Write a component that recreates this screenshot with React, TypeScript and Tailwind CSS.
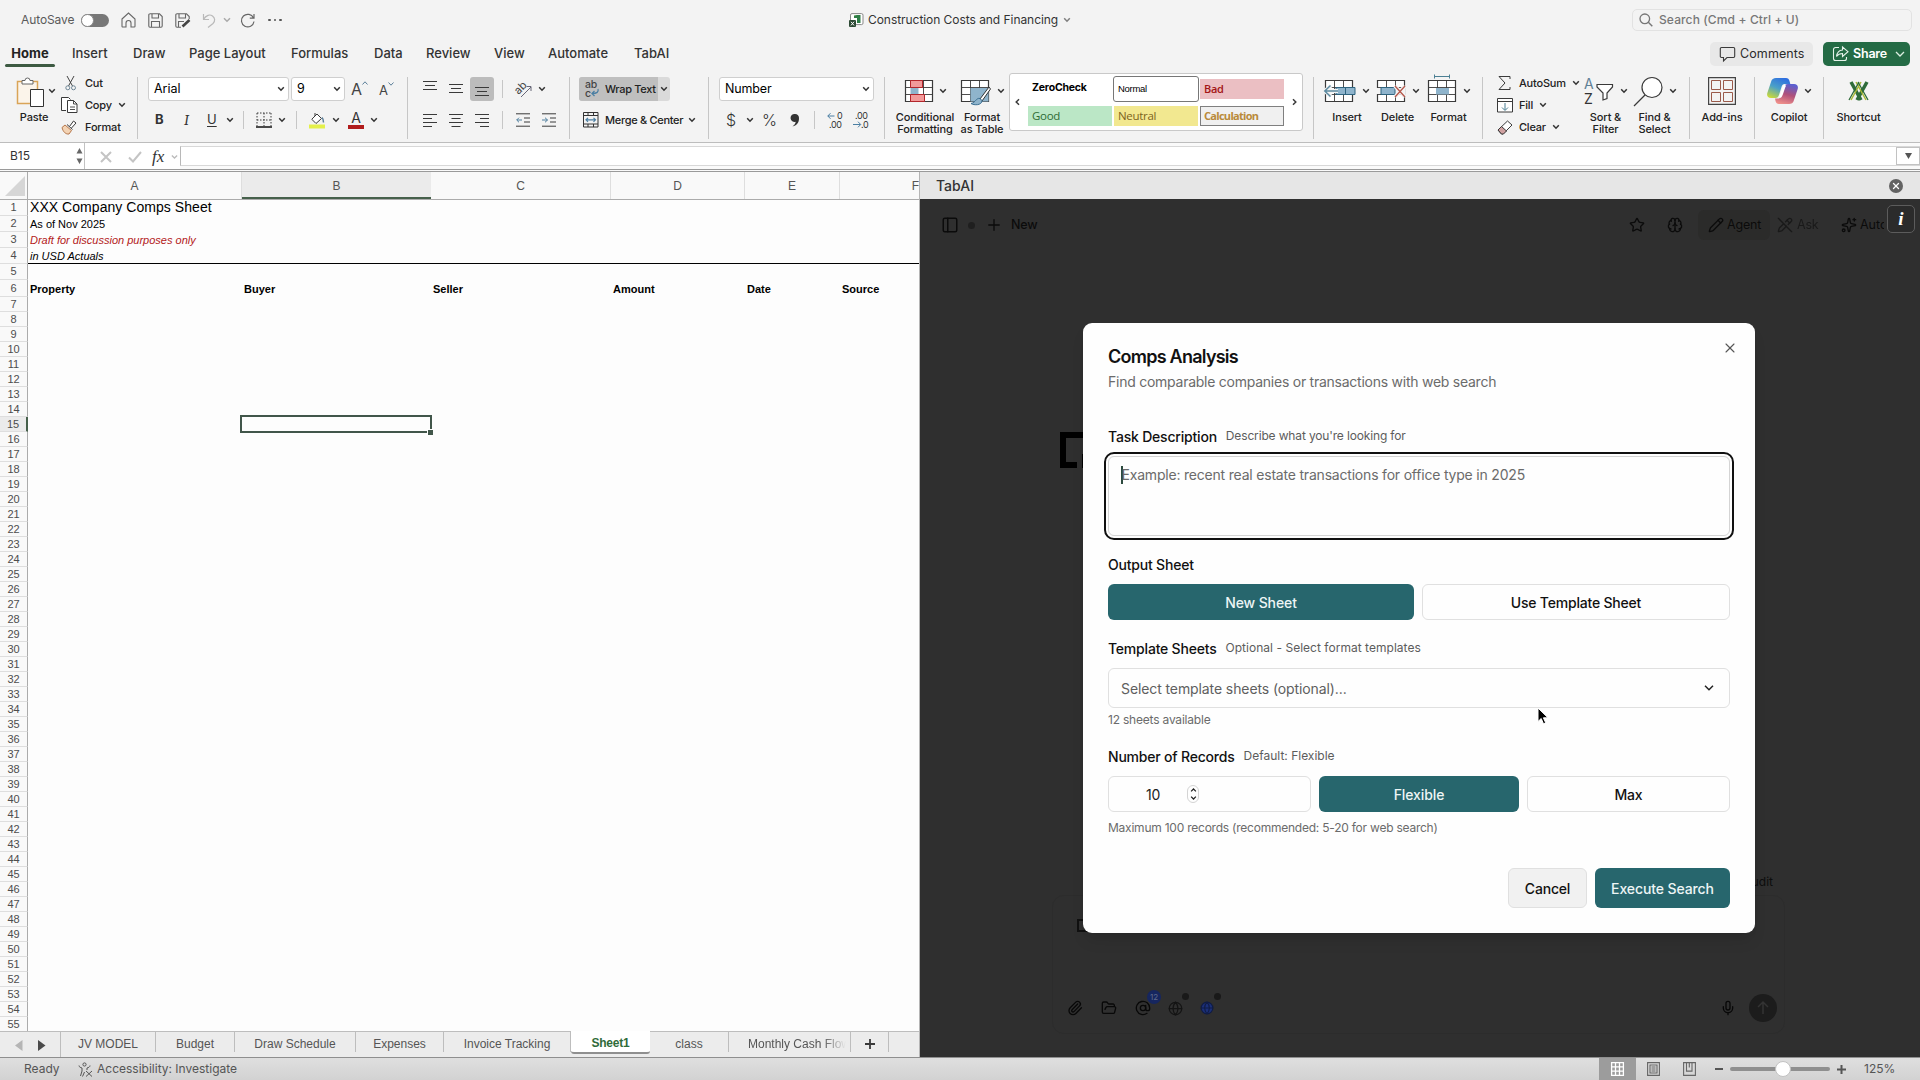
import type { ReactNode } from 'react';
import {
  AtSign,
  Brain,
  FolderOpen,
  Globe,
  Mic,
  PanelLeft,
  Paperclip,
  Pencil,
  PencilOff,
  Plus,
  Sparkles,
  Star,
  X,
} from 'lucide-react';

const TABS = [
  { label: 'Insert', width: 'w-[61px]' },
  { label: 'Draw', width: 'w-[56px]' },
  { label: 'Page Layout', width: 'w-[102px]' },
  { label: 'Formulas', width: 'w-[83px]' },
  { label: 'Data', width: 'w-[52px]' },
  { label: 'Review', width: 'w-[68px]' },
  { label: 'View', width: 'w-[54px]' },
  { label: 'Automate', width: 'w-[86px]' },
  { label: 'TabAI', width: 'w-[60px]' },
];

const COLUMNS = [
  { key: 'A', width: 'w-[214px]' },
  { key: 'B', width: 'w-[189px]' },
  { key: 'C', width: 'w-[180px]' },
  { key: 'D', width: 'w-[134px]' },
  { key: 'E', width: 'w-[95px]' },
  { key: 'F', width: 'w-[152px]' },
];

const HEADINGS = ['Property', 'Buyer', 'Seller', 'Amount', 'Date', 'Source'];

const ROWS = Array.from({ length: 55 }, (_, i) => i + 1);

const SHEETS = [
  { label: 'JV MODEL', width: 'w-[95px]' },
  { label: 'Budget', width: 'w-[79px]' },
  { label: 'Draw Schedule', width: 'w-[121px]' },
  { label: 'Expenses', width: 'w-[88px]' },
  { label: 'Invoice Tracking', width: 'w-[127px]' },
  { label: 'Sheet1', width: 'w-[79px]', active: true },
  { label: 'class', width: 'w-[79px]' },
];

/* ---------- small shared pieces ---------- */

function Chevron({ className = '' }: { className?: string }) {
  return (
    <svg
      viewBox="0 0 8 6"
      className={`h-[6px] w-[8px] shrink-0 ${className}`}
      fill="none"
      stroke="#333"
      strokeWidth="1.5"
    >
      <path d="M1.2 1.2 4 4.2 6.8 1.2" />
    </svg>
  );
}

function Divider({ className = '' }: { className?: string }) {
  return <div className={`mt-1 h-[62px] w-px shrink-0 bg-[#c6c6c6] ${className}`} />;
}

function MiniDivider({ className = '' }: { className?: string }) {
  return <div className={`h-[18px] w-px shrink-0 bg-[#c6c6c6] ${className}`} />;
}

interface SvgProps {
  w: number;
  h: number;
  className?: string;
  children: ReactNode;
}

function Svg({ w, h, className = '', children }: SvgProps) {
  return (
    <svg
      width={w}
      height={h}
      viewBox={`0 0 ${w} ${h}`}
      className={`shrink-0 overflow-visible ${className}`}
      fill="none"
      stroke="#3a3a3a"
    >
      {children}
    </svg>
  );
}

function BigButton({
  label,
  icon,
  width,
  chevron = true,
}: {
  label: string[];
  icon: ReactNode;
  width: string;
  chevron?: boolean;
}) {
  return (
    <div className={`mt-1 flex shrink-0 flex-col items-center ${width}`}>
      <div className="flex h-[34px] items-start gap-1.5">
        {icon}
        {chevron && <Chevron className="mt-[11px]" />}
      </div>
      <div className="text-center text-[11px] leading-[12px] font-medium tracking-[-0.12px] whitespace-nowrap text-[#222]">
        {label.map((line) => (
          <div key={line}>{line}</div>
        ))}
      </div>
    </div>
  );
}

function SmallButton({
  label,
  icon,
  chevron,
}: {
  label: string;
  icon: ReactNode;
  chevron?: boolean;
}) {
  return (
    <div className="flex h-[22px] items-center text-[11px] font-medium tracking-[-0.2px] text-[#222]">
      <div className="flex w-[22px] items-center">{icon}</div>
      <span className="whitespace-nowrap">{label}</span>
      {chevron && <Chevron className="ml-1.5" />}
    </div>
  );
}

function AlignIcon({
  lines,
  className = '',
}: {
  lines: [number, number, number][];
  className?: string;
}) {
  return (
    <Svg w={14} h={14} className={className}>
      {lines.map(([x1, x2, y]) => (
        <path key={y} d={`M${x1} ${y}H${x2}`} />
      ))}
    </Svg>
  );
}

/* ---------- title bar ---------- */

function TitleBar() {
  return (
    <div className="flex h-[40px] items-center">
      <div className="flex w-[849px] items-center pl-[21px]">
        <span className="w-[60px] text-[12px] tracking-[-0.1px] text-[#5a5a5a]">AutoSave</span>
        <div className="flex h-[13px] w-[28px] items-center rounded-full bg-[#777]">
          <div className="h-[13px] w-[13px] rounded-full border border-[#8a8a8a] bg-white" />
        </div>
        <Svg w={15} h={16} className="ml-[12px]">
          <path
            stroke="#666"
            strokeWidth="1.1"
            d="M1 7 7.5 1 14 7v7.2c0 .5-.3.8-.8.8H10v-4a2.5 2.5 0 0 0-5 0v4H1.8c-.5 0-.8-.3-.8-.8z"
          />
        </Svg>
        <Svg w={15} h={15} className="ml-[12px]">
          <path
            stroke="#666"
            strokeWidth="1.1"
            d="M1.5 .8h10L14.2 3.5V13c0 .7-.5 1.2-1.2 1.2H2A1.2 1.2 0 0 1 .8 13V2Q.8 .8 2 .8M4 .8V5h6.5V.8M3.5 14V8.5h8V14"
          />
        </Svg>
        <Svg w={16} h={15} className="ml-[12px]">
          <path
            stroke="#666"
            strokeWidth="1.1"
            d="M6 14.2H2A1.2 1.2 0 0 1 .8 13V2Q.8 .8 2 .8h9.5L14.2 3.5V6M4 .8V5h6.5V.8M3.5 14V8.5H9"
          />
          <path stroke="#444" strokeWidth="2.6" d="m7.5 13.5 7-6.5" />
        </Svg>
        <Svg w={14} h={15} className="ml-[11px]">
          <path stroke="#b9b9b9" strokeWidth="1.2" d="M1.5 1v5.5H7M1.5 6.5C4 2 8 1 10.5 3s3 5 .5 7.5L6 14.5" />
        </Svg>
        <svg viewBox="0 0 8 6" className="ml-[7px] h-[6px] w-[8px]" fill="none" stroke="#aaa" strokeWidth="1.5">
          <path d="M1 1.2 4 4.2 7 1.2" />
        </svg>
        <Svg w={16} h={15} className="ml-[9px]">
          <path stroke="#666" strokeWidth="1.2" d="M13.5 5A6.3 6.3 0 1 0 14 8.5M14 1v4.2H9.8" />
        </Svg>
        <div className="ml-[12px] flex gap-[3px]">
          <i className="h-[2.5px] w-[2.5px] rounded-full bg-[#555]" />
          <i className="h-[2.5px] w-[2.5px] rounded-full bg-[#555]" />
          <i className="h-[2.5px] w-[2.5px] rounded-full bg-[#555]" />
        </div>
      </div>
      <Svg w={15} h={14}>
        <rect x="1.5" y=".6" width="12.5" height="11" rx="1.5" fill="#fff" stroke="#888" />
        <path stroke="none" fill="#9cc98d" d="M5 2h3v3H5z" />
        <path stroke="none" fill="#2e7d46" d="M8 2h3.5v8H8V5H5V3" />
        <rect x="0" y="7" width="7" height="7" rx="1" fill="#2d4a35" stroke="none" />
        <path stroke="#fff" d="m2 8.8 3 3.6M5 8.8l-3 3.6" />
      </Svg>
      <span className="ml-[4px] w-[191px] text-[12px] tracking-[-0.05px] whitespace-nowrap text-[#333]">
        Construction Costs and Financing
      </span>
      <Chevron className="ml-[4px] opacity-60" />
      <div className="mr-[8px] ml-auto flex h-[22px] w-[280px] items-center rounded-[5px] border border-[#e2e2e2] pl-[6px]">
        <Svg w={14} h={14}>
          <circle cx="5.8" cy="5.8" r="4.8" stroke="#777" strokeWidth="1.3" />
          <path stroke="#777" strokeWidth="1.4" d="m9.3 9.3 4 4" />
        </Svg>
        <span className="ml-[6px] text-[12px] font-medium tracking-[0.12px] text-[#777]">
          Search (Cmd + Ctrl + U)
        </span>
      </div>
    </div>
  );
}

function TabRow() {
  return (
    <div className="flex h-[27px] text-[13px] font-medium text-[#333]">
      <div className="ml-[5px] flex w-[50px] flex-col items-center">
        <span className="h-[24px] leading-[27px] font-bold text-[#222]">Home</span>
        <div className="h-[3px] w-[50px] rounded-full bg-[#3d5a42]" />
      </div>
      <div className="ml-[17px] flex">
        {TABS.map((t) => (
          <div key={t.label} className={`leading-[27px] whitespace-nowrap ${t.width}`}>
            {t.label}
          </div>
        ))}
      </div>
      <div className="mt-[2px] mr-[10px] ml-auto flex h-[24px] gap-[10px]">
        <div className="flex w-[103px] items-center rounded-[5px] bg-[#e8e8e8] pl-[9px]">
          <Svg w={17} h={16}>
            <path
              strokeWidth="1.1"
              d="M2.5 1.5h12c.7 0 1.2.5 1.2 1.2v7.6c0 .7-.5 1.2-1.2 1.2H8l-3.5 3.5v-3.5h-2c-.7 0-1.2-.5-1.2-1.2V2.7c0-.7.5-1.2 1.2-1.2z"
            />
          </Svg>
          <span className="ml-[4px] text-[12.5px] font-normal tracking-[0.1px] text-[#2b2b2b]">Comments</span>
        </div>
        <div className="flex w-[87px] items-center rounded-[5px] bg-[#246b45] pl-[9px] text-white">
          <Svg w={17} h={16}>
            <g stroke="#e6f2ea" strokeWidth="1.1">
              <path d="M7 1.5H3.5A2 2 0 0 0 1.5 3.5v9a2 2 0 0 0 2 2h9a2 2 0 0 0 2-2V11" />
              <path d="M10.500 1v3C7 4.300 5 6.500 4.500 10.500 6 8.300 8 7.500 10.500 7.500v3L16 5.700z" />
            </g>
          </Svg>
          <span className="ml-[4px] text-[12.5px] font-semibold tracking-[-0.2px]">Share</span>
          <svg viewBox="0 0 10 6" className="ml-[8px] h-[6px] w-[10px]" fill="none" stroke="#dcefe2" strokeWidth="1.3">
            <path d="M1 1 5 5 9 1" />
          </svg>
        </div>
      </div>
    </div>
  );
}

/* ---------- ribbon ---------- */

function ClipboardGroup() {
  return (
    <div className="flex w-[137px] shrink-0">
      <div className="mt-1 ml-[11px] flex w-[46px] shrink-0 flex-col">
        <div className="flex h-[34px] gap-[3px] pl-[5px]">
          <Svg w={29} h={31}>
            <rect x="1.5" y="4.5" width="20" height="22" fill="#fbf4ea" stroke="#d9a457" strokeWidth="1.5" />
            <path d="M6 7V3.500h3a2.500 2.500 0 0 1 5 0h3V7z" fill="#fff" stroke="#666" />
            <path d="M14.500 12.500h13v17h-13z" fill="#fff" stroke="#333" />
          </Svg>
          <Chevron className="mt-[11px]" />
        </div>
        <div className="w-[46px] text-center text-[11px] leading-[12px] font-medium tracking-[-0.2px] text-[#222]">
          Paste
        </div>
      </div>
      <div className="-mt-[1px] ml-[6px]">
        <SmallButton
          label="Cut"
          icon={
            <Svg w={16} h={16}>
              <path stroke="#444" d="m4 1 5.500 10M11 1 5.500 11" />
              <circle cx="4.8" cy="12.8" r="2" stroke="#6f8796" />
              <circle cx="10.5" cy="12.8" r="2" stroke="#6f8796" />
            </Svg>
          }
        />
        <SmallButton
          label="Copy"
          chevron
          icon={
            <Svg w={17} h={16} className="-ml-0.5">
              <path d="M5 13.500H.5v-13h7l2 2" fill="#fff" />
              <path d="M6.500 3.500h6l3.500 3.500v8.500H6.500z" fill="#fff" />
              <path d="M12.500 3.500V7H16M9 10h5M9 12.500h5" strokeWidth=".9" />
            </Svg>
          }
        />
        <SmallButton
          label="Format"
          icon={
            <Svg w={16} h={15} className="-ml-0.5">
              <path d="M1 7.500 4 5l6.500 5.500L8 14c-3 .5-6-2-7-6.500z" fill="#f3d3b4" stroke="#b5764a" />
              <path d="m6 4.500 5.500 5M8.500 6.500l4-5.500L15 3l-4.500 5" fill="#fff" />
            </Svg>
          }
        />
      </div>
    </div>
  );
}

function FontGroup() {
  return (
    <div className="mt-1 w-[269px] shrink-0 pl-[10px]">
      <div className="flex h-[24px] items-center">
        <div className="flex h-[24px] w-[141px] items-center justify-between rounded-[3px] border border-[#cfcfcf] bg-white pr-[3px] pl-[5px] text-[12.5px] text-black">
          Arial
          <Chevron />
        </div>
        <div className="ml-[2px] flex h-[24px] w-[54px] items-center justify-between rounded-[3px] border border-[#cfcfcf] bg-white pr-[3px] pl-[5px] text-[12.5px] text-black">
          9
          <Chevron />
        </div>
        <div className="ml-[6px] flex w-[28px] items-start text-[16px] leading-[18px] text-[#444]">
          A
          <svg viewBox="0 0 6 4" className="mt-[1px] h-[4px] w-[6px]" fill="none" stroke="#5b7f99">
            <path d="M.5 3.500 3 .8l2.500 2.700" />
          </svg>
        </div>
        <div className="mt-[2px] flex items-start text-[13px] leading-[16px] text-[#444]">
          A
          <svg viewBox="0 0 6 4" className="h-[4px] w-[6px]" fill="none" stroke="#5b7f99">
            <path d="M.5 .5 3 3.200 5.500 .5" />
          </svg>
        </div>
      </div>
      <div className="mt-[7px] flex h-[24px] items-center text-[14px] text-[#333]">
        <span className="w-[25px] pl-[7px] text-[13px] font-bold">B</span>
        <span className="w-[34px] pl-[11px] font-serif text-[15px] italic">I</span>
        <span className="w-[19px] text-[13px] underline underline-offset-2">U</span>
        <Chevron />
        <MiniDivider className="ml-[9px]" />
        <Svg w={16} h={16} className="ml-[12px]">
          <path strokeDasharray="1.5 1.5" d="M1 1h14M1 8h14M1 1v13M8 1v13M15 1v13" />
          <path stroke="#111" strokeWidth="1.5" d="M0 15h16" />
        </Svg>
        <Chevron className="ml-[6px]" />
        <MiniDivider className="ml-[10px]" />
        <Svg w={17} h={17} className="ml-[12px]">
          <path d="m3 7 5-5 4.500 4.500L7 11.500 3 7.500zM6 4V1" fill="#fff" />
          <path stroke="#5b7f99" strokeWidth="1.5" d="M13 5.500c1.500 1.500 1.500 3 1.500 5" />
          <path stroke="#e4f04a" strokeWidth="4" d="M0 14.500h16" />
        </Svg>
        <Chevron className="ml-[6px]" />
        <div className="ml-[8px] flex w-[16px] flex-col items-center text-[14px] leading-[12px]">
          A
          <div className="mt-[1px] h-[4px] w-[16px] bg-[#b01c1c]" />
        </div>
        <Chevron className="ml-[6px]" />
      </div>
    </div>
  );
}

function AlignGroup() {
  return (
    <div className="mt-1 w-[161px] shrink-0">
      <div className="flex h-[24px] items-center pl-[15px]">
        <AlignIcon className="-mt-[6px]" lines={[[0, 14, 2.5], [2, 12, 6.5], [0, 14, 10.5]]} />
        <AlignIcon className="ml-[12px]" lines={[[0, 14, 2.5], [2, 12, 6.5], [0, 14, 10.5]]} />
        <div className="ml-[7px] flex h-[24px] w-[24px] items-end justify-center rounded-[3px] bg-[#bcbcbc] pb-[3px]">
          <AlignIcon lines={[[0, 14, 3.5], [2, 12, 7.5], [0, 14, 11.5]]} />
        </div>
        <MiniDivider className="ml-[8px]" />
        <Svg w={18} h={17} className="ml-[12px]">
          <text x="1" y="10" transform="rotate(-45 7 9)" fontSize="11" fill="#444" stroke="none">
            ab
          </text>
          <path stroke="#667" d="m6 16 10-10M11.500 5.500H16V10" />
        </Svg>
        <Chevron className="ml-[5px]" />
      </div>
      <div className="mt-[7px] flex h-[24px] items-center pl-[15px]">
        <AlignIcon lines={[[0, 14, 1.5], [0, 9, 5.5], [0, 14, 9.5], [0, 9, 13.5]]} />
        <AlignIcon className="ml-[12px]" lines={[[0, 14, 1.5], [2.5, 11.5, 5.5], [0, 14, 9.5], [2.5, 11.5, 13.5]]} />
        <AlignIcon className="ml-[12px]" lines={[[0, 14, 1.5], [5, 14, 5.5], [0, 14, 9.5], [5, 14, 13.5]]} />
        <MiniDivider className="ml-[13px]" />
        <Svg w={14} h={14} className="ml-[13px]">
          <path d="M0 .8h14M8 5h6M8 9h6M0 13.200h14" />
          <path stroke="#4f7f9e" d="M6 7H.8M3 4.700.7 7 3 9.300" />
        </Svg>
        <Svg w={14} h={14} className="ml-[12px]">
          <path d="M0 .8h14M8 5h6M8 9h6M0 13.200h14" />
          <path stroke="#4f7f9e" d="M0 7h5.500M3 4.700 5.500 7 3 9.300" />
        </Svg>
      </div>
    </div>
  );
}

function WrapGroup() {
  return (
    <div className="mt-1 w-[138px] shrink-0 pl-[9px] text-[11px] font-medium tracking-[-0.3px] text-[#222]">
      <div className="flex h-[24px] w-[91px] overflow-hidden rounded-[3px] bg-[#dadada]">
        <div className="flex w-[79px] shrink-0 items-center bg-[#bfbfbf] pl-[6px]">
          <Svg w={15} h={18}>
            <g fill="#444" stroke="none" fontSize="10.5">
              <text x="0" y="8">ab</text>
              <text x="0" y="17">c</text>
            </g>
            <path stroke="#4b7fa3" strokeWidth="1.3" d="M13 9c.8 3-1 4.500-6 4.500M9.500 11 7 13.500 9.500 16" />
          </Svg>
          <span className="ml-[5px] whitespace-nowrap">Wrap Text</span>
        </div>
        <Chevron className="mt-[9px] ml-[2px]" />
      </div>
      <div className="mt-[7px] flex h-[24px] items-center pl-[4px]">
        <Svg w={16} h={16}>
          <path stroke="#333" d="M.5 .5h14.500v14.500H.5zM.5 3.500H15M.5 12H15M5 .5v3M10.500 .5v3M5 12v3M10.500 12v3" />
          <path stroke="#4b7fa3" strokeWidth="1.2" d="M3 7.800h9.500M5 5.800l-2 2 2 2M10.500 5.800l2 2-2 2" />
        </Svg>
        <span className="ml-[6px] w-[83px] whitespace-nowrap">Merge &amp; Center</span>
        <Chevron />
      </div>
    </div>
  );
}

function NumberGroup() {
  return (
    <div className="mt-1 w-[175px] shrink-0 pl-[10px]">
      <div className="flex h-[24px] w-[155px] items-center justify-between rounded-[3px] border border-[#cfcfcf] bg-white pr-[3px] pl-[5px] text-[12.5px] tracking-[-0.15px] text-black">
        Number
        <Chevron />
      </div>
      <div className="mt-[7px] flex h-[24px] items-center text-[#333]">
        <span className="w-[27px] pl-[7px] text-[16px] font-light">$</span>
        <Chevron />
        <span className="ml-[8px] w-[28px] text-[16px] font-light">%</span>
        <Svg w={9} h={13} className="ml-[1px]">
          <path stroke="none" fill="#333" d="M4 0a4 4 0 0 1 4 4.500C8 9 5.500 11.500 1.500 12.500c2-1.500 3-3 3.200-4.700A4 4 0 1 1 4 0z" />
        </Svg>
        <MiniDivider className="ml-[14px]" />
        <Svg w={16} h={17} className="ml-[12px]">
          <g fill="#333" stroke="none" fontSize="9" letterSpacing="-.4">
            <text x="10" y="7">0</text>
            <text x="2" y="16">.00</text>
          </g>
          <path stroke="#4b7fa3" d="M7.500 4H.8M3.500 1.200.8 4l2.700 2.800" />
        </Svg>
        <Svg w={16} h={17} className="ml-[10px]">
          <g fill="#333" stroke="none" fontSize="9" letterSpacing="-.4">
            <text x="2" y="7">.00</text>
            <text x="8" y="16">.0</text>
          </g>
          <path stroke="#4b7fa3" d="M0 12.500h7.500M5 9.700l2.700 2.800L5 15.300" />
        </Svg>
      </div>
    </div>
  );
}

function StyleGallery() {
  return (
    <div className="flex h-[58px] w-[294px] shrink-0 items-center rounded-[3px] border border-[#c9c9c9] bg-white text-[11.5px] leading-none">
      <Svg w={5} h={8} className="ml-[5px]">
        <path strokeWidth="1.5" d="M4 1.200 1.200 4 4 6.800" />
      </Svg>
      <div className="ml-[8px] grid w-[257px] grid-cols-[84px_84px_84px] gap-x-[2px] gap-y-[7px]">
        <div className="flex h-[20px] items-center pl-[4px] text-[10.5px] font-bold tracking-[-0.2px] text-black">
          ZeroCheck
        </div>
        <div className="-m-[3px] -mr-[1px] -ml-[1px] flex h-[26px] items-center rounded-[3px] border border-[#777] pl-[4px] font-['Liberation_Sans'] text-[9.5px] tracking-[-0.3px] text-black">
          Normal
        </div>
        <div className="flex h-[20px] items-center bg-[#ebbfc3] pl-[4px] font-['Open_Sans'] text-[11px] font-semibold tracking-[-0.3px] text-[#a31515]">
          Bad
        </div>
        <div className="flex h-[20px] items-center bg-[#bbe7c6] pl-[4px] font-['Open_Sans'] font-medium tracking-[-0.3px] text-[#2f6b35]">
          Good
        </div>
        <div className="flex h-[20px] items-center bg-[#f2e890] pl-[4px] font-['Open_Sans'] font-medium tracking-[-0.3px] text-[#7d6420]">
          Neutral
        </div>
        <div className="flex h-[20px] items-center border border-[#7f7f7f] bg-[#f0f0f0] pl-[3px] font-['Open_Sans'] text-[11px] font-bold tracking-[-0.7px] text-[#b98a3a]">
          Calculation
        </div>
      </div>
      <Svg w={5} h={8} className="ml-[7px]">
        <path strokeWidth="1.5" d="M1 1.200 3.800 4 1 6.800" />
      </Svg>
    </div>
  );
}

function GridBase() {
  return (
    <>
      <path fill="#fff" d="M1.500 3.500h27v21h-27z" />
      <path strokeWidth=".9" d="M1.500 10.500h27M1.500 17.500h27M10.500 3.500v21M19.500 3.500v21" />
      <path strokeWidth="1.2" d="M1.500 3.500h27v21h-27z" />
    </>
  );
}

function Ribbon() {
  return (
    <div className="flex h-[76px] border-b border-[#bdbdbd] pt-[6px]">
      <ClipboardGroup />
      <Divider />
      <FontGroup />
      <Divider />
      <AlignGroup />
      <Divider className="-mt-px" />
      <WrapGroup />
      <Divider />
      <NumberGroup />
      <Divider />
      <div className="ml-[10px] flex w-[114px] shrink-0">
        <BigButton
          width="w-[60px]"
          label={['Conditional', 'Formatting']}
          icon={
            <Svg w={29} h={26}>
              <GridBase />
              <path stroke="#b3262b" fill="#f29a9a" d="M6.500 3.500h12v7h-12zM6.500 17.500h14v7h-14z" />
              <path stroke="none" fill="#8fb4cc" d="M6.500 11h8v6h-8z" />
            </Svg>
          }
        />
        <BigButton
          width="w-[54px]"
          label={['Format', 'as Table']}
          icon={
            <Svg w={31} h={29}>
              <GridBase />
              <path stroke="none" fill="#8fb4cc" d="M10.500 11h18v13.500h-18z" />
              <path stroke="#333" fill="#fff" d="m29 10-9 12 2 2 8.500-12z" />
              <path stroke="#3a6f93" fill="#8fb4cc" d="M20 21.500c-4-1-4 4-9 5 3 2 11 2 11-3z" />
            </Svg>
          }
        />
      </div>
      <StyleGallery />
      <Divider className="ml-[10px]" />
      <div className="ml-[7px] flex w-[161px] shrink-0">
        <BigButton
          width="w-[52px]"
          label={['Insert']}
          icon={
            <Svg w={32} h={28}>
              <GridBase />
              <path stroke="#2f6580" fill="#8fb4cc" d="M12 10.500h19v7H12z" />
              <path stroke="#2f6580" d="M21.500 10.500v7" />
              <path stroke="#f3f3f3" strokeWidth="4" d="M1 14h13M7 8.500 1 14l6 5.500" />
              <path stroke="#5c8aa0" strokeWidth="1.5" d="M.8 14H14M6.500 8.500.8 14l5.700 5.500" />
            </Svg>
          }
        />
        <BigButton
          width="w-[49px]"
          label={['Delete']}
          icon={
            <Svg w={30} h={28}>
              <GridBase />
              <path stroke="none" fill="#f3f3f3" d="M0 11h29v6H0z" />
              <path stroke="#2f6580" fill="#8fb4cc" d="M5 10.500h14v7H5z" />
              <path stroke="#f3f3f3" strokeWidth="4" d="m19 9 10 11M29 9 19 20" />
              <path stroke="#b5574a" strokeWidth="1.3" d="m19 9 10 11M29 9 19 20" />
            </Svg>
          }
        />
        <BigButton
          width="w-[53px]"
          label={['Format']}
          icon={
            <Svg w={30} h={28}>
              <GridBase />
              <path stroke="none" fill="#8fb4cc" d="M9 11h13v6.500H9z" />
              <path stroke="#4b7f93" d="M7.500-.5h15M7.500-2.500v4M22.500-2.500v4" />
            </Svg>
          }
        />
      </div>
      <Divider />
      <div className="-mt-[1px] ml-[14px] w-[84px] shrink-0">
        <SmallButton
          label="AutoSum"
          chevron
          icon={
            <Svg w={16} h={16}>
              <path d="M13 4V1.500H2L8 8l-6 6.500h11V12" />
            </Svg>
          }
        />
        <SmallButton
          label="Fill"
          chevron
          icon={
            <Svg w={16} h={15}>
              <path fill="#fff" d="M.5 .5h15v13.500H.5zM.5 3.500h15" />
              <path stroke="#4b7f93" d="M8 5v7M5 9.500l3 3 3-3" />
            </Svg>
          }
        />
        <SmallButton
          label="Clear"
          chevron
          icon={
            <Svg w={16} h={15}>
              <path fill="#fff" d="m1 10 9.500-9L15 5l-9 9H4.500z" />
              <path fill="#cfa0a0" d="m1 10 3.500-3.500 5 4.500L6.500 14h-2z" />
            </Svg>
          }
        />
      </div>
      <div className="flex w-[108px] shrink-0">
        <BigButton
          width="w-[49px]"
          label={['Sort &', 'Filter']}
          icon={
            <Svg w={30} h={28}>
              <text x="0" y="12" fontSize="14" fill="#5f7f95" stroke="none">A</text>
              <text x="0" y="27" fontSize="14" fill="#333" stroke="none">Z</text>
              <path fill="#fff" strokeWidth="1.2" d="M13 7.500h15.500v2.500L23 16v5.500l-4 1.500v-7l-6-6z" />
            </Svg>
          }
        />
        <BigButton
          width="w-[49px]"
          label={['Find &', 'Select']}
          icon={
            <Svg w={30} h={30}>
              <circle cx="19" cy="10.5" r="10" fill="#fff" strokeWidth="1.2" />
              <path strokeWidth="1.2" d="M12 18 1 29" />
            </Svg>
          }
        />
      </div>
      <Divider />
      <BigButton
        width="w-[64px]"
        chevron={false}
        label={['Add-ins']}
        icon={
          <Svg w={28} h={28}>
            <path stroke="#444" strokeWidth="1.2" d="M.6 .6h26.800v26.800H.6z" />
            <path stroke="#9a5a4a" d="M3.500 3.500h9v9h-9zM15.500 3.500h9v9h-9zM3.500 15.500h9v9h-9zM15.500 15.500h9v9h-9z" />
          </Svg>
        }
      />
      <Divider />
      <BigButton
        width="w-[68px]"
        label={['Copilot']}
        icon={
          <Svg w={31} h={28}>
            <defs>
              <linearGradient id="copilotLeft" x1=".7" y1="0" x2=".2" y2="1">
                <stop offset="0" stopColor="#2f6fe0" />
                <stop offset=".5" stopColor="#4aa0c8" />
                <stop offset="1" stopColor="#c9d93a" />
              </linearGradient>
              <linearGradient id="copilotRight" x1=".6" y1="0" x2=".3" y2="1">
                <stop offset="0" stopColor="#5b5fd0" />
                <stop offset=".5" stopColor="#b0507a" />
                <stop offset="1" stopColor="#f0908a" />
              </linearGradient>
            </defs>
            <path
              stroke="none"
              fill="url(#copilotLeft)"
              d="M9 1h10c2 0 3 1 3.500 3l.8 3H18c-2 0-3 1-3.500 3L12 18c-.7 2-1.500 3-3.500 3H4c-3 0-4.500-2-3.700-5L4 5c.8-3 2.500-4 5-4z"
            />
            <path
              stroke="none"
              fill="url(#copilotRight)"
              d="M22 27H12c-2 0-3-1-3.500-3L8 21.500h3c2 0 3-1 3.700-3.500l2.500-8c.6-2 1.500-3 3.500-3H27c3 0 4.500 2 3.700 5L27 23c-.8 3-2.500 4-5 4z"
            />
            <path stroke="#fff" strokeWidth="2.5" d="M13 20c2-1 3-9 5-12" />
          </Svg>
        }
      />
      <Divider />
      <BigButton
        width="w-[69px]"
        chevron={false}
        label={['Shortcut']}
        icon={
          <Svg w={22} h={24}>
            <path stroke="#2e6b3a" strokeWidth="3.5" d="m3 5 10 18M19 5 9 23" />
            <path stroke="#a9b836" strokeWidth="1.5" d="m8 5 10 18M13 5 3 23" />
            <path stroke="#2e6b3a" strokeWidth="1.3" d="m10 5 10 18M11 5 1 23" />
          </Svg>
        }
      />
    </div>
  );
}

function FormulaBar() {
  return (
    <div className="h-[29px] border-b border-[#9a9a9a] bg-[#fafafa]">
      <div className="flex h-[27px] items-stretch border-b border-[#9a9a9a]">
        <div className="flex w-[85px] items-center justify-between border-r border-[#c2c2c2] bg-white pr-[1px] pl-[10px] text-[12px] text-[#333]">
          B15
          <Svg w={7} h={18}>
            <path stroke="none" fill="#666" d="M.5 6.500 3.500 1l3 5.500zM.5 11.500h6l-3 5.500z" />
          </Svg>
        </div>
        <div className="flex w-[95px] items-center bg-white pt-px">
          <Svg w={12} h={12} className="ml-[15px]">
            <path stroke="#c4c4c4" strokeWidth="2" d="m1 1 10 10M11 1 1 11" />
          </Svg>
          <Svg w={14} h={12} className="ml-[16px]">
            <path stroke="#c4c4c4" strokeWidth="2" d="m1 6.500 4 4L13 1" />
          </Svg>
          <span className="ml-[10px] w-[17px] font-['Liberation_Serif'] text-[17px] leading-none text-[#333] italic">
            fx
          </span>
          <svg viewBox="0 0 8 6" className="ml-[2px] h-[6px] w-[7px]" fill="none" stroke="#bbb" strokeWidth="1.5">
            <path d="M1 1.200 4 4.200 7 1.200" />
          </svg>
        </div>
        <div className="my-[3px] flex flex-1 justify-end border border-r-0 border-[#d8d8d8] border-l-[#b8b8b8] bg-white">
          <div className="flex w-[24px] items-center justify-center border border-[#c2c2c2]">
            <Svg w={7} h={6}>
              <path stroke="none" fill="#555" d="M0 0h7L3.500 6z" />
            </Svg>
          </div>
        </div>
      </div>
    </div>
  );
}

/* ---------- worksheet ---------- */

function rowHeight(n: number): string {
  if (n <= 5) return 'h-[16px]';
  if (n === 6) return 'h-[17px]';
  return 'h-[15px]';
}

function RowContent({ n }: { n: number }) {
  switch (n) {
    case 1:
      return (
        <span className="pl-[2px] text-[14px] leading-[15px] tracking-[0.05px] text-black">
          XXX Company Comps Sheet
        </span>
      );
    case 2:
      return <span className="pl-[2px] leading-[16px] text-black">As of Nov 2025</span>;
    case 3:
      return <span className="pl-[2px] leading-[16px] text-[#b3201a] italic">Draft for discussion purposes only</span>;
    case 4:
      return <span className="pl-[2px] leading-[16px] text-black italic">in USD Actuals</span>;
    case 6:
      return (
        <>
          {COLUMNS.map((c, i) => (
            <span key={c.key} className={`shrink-0 pl-[2px] leading-[18px] font-bold text-black ${c.width}`}>
              {HEADINGS[i]}
            </span>
          ))}
        </>
      );
    case 15:
      return (
        <div className="relative ml-[212px] w-[192px]">
          <div className="absolute -top-[2px] left-0 h-[18px] w-[192px] border-2 border-[#41564a]" />
          <div className="absolute top-[12px] left-[187px] h-[6px] w-[6px] border-t border-l border-white bg-[#41564a]" />
        </div>
      );
    default:
      return null;
  }
}

function Worksheet() {
  return (
    <div className="flex w-[919px] shrink-0 flex-col font-['Liberation_Sans'] text-[11px]">
      <div className="flex h-[28px] overflow-hidden border-b border-[#ababab] bg-[#f9f9f9] text-[12px] text-[#555]">
        <div className="flex w-[28px] shrink-0 items-end justify-end border-r border-[#ababab] pr-[2px] pb-[3px]">
          <Svg w={20} h={20}>
            <path stroke="none" fill="#d6d6d6" d="M20 0v20H0z" />
          </Svg>
        </div>
        {COLUMNS.map((c) => (
          <div
            key={c.key}
            className={`flex shrink-0 items-center justify-center ${c.width} ${
              c.key === 'B'
                ? 'border-b-2 border-[#46604b] bg-[#ebebeb] pt-[2px]'
                : 'border-r border-[#dedede]'
            }`}
          >
            {c.key}
          </div>
        ))}
      </div>
      <div className="flex-1 overflow-hidden bg-[#fdfdfd]">
        {ROWS.map((n) => (
          <div key={n} className={`flex ${rowHeight(n)}`}>
            <div
              className={`flex w-[28px] shrink-0 items-center justify-center border-r border-b border-b-[#dedede] text-[#4d4d4d] ${
                n === 15 ? 'border-r-2 border-r-[#46604b] bg-[#ebebeb]' : 'border-r-[#ababab] bg-[#f9f9f9]'
              }`}
            >
              {n}
            </div>
            <div className={`flex w-[891px] overflow-visible whitespace-nowrap ${n === 4 ? 'border-b border-black' : ''}`}>
              <RowContent n={n} />
            </div>
          </div>
        ))}
      </div>
      <div className="flex h-[26px] bg-[#ececec] text-[12px] text-[#555]">
        <div className="flex w-[61px] items-center border-t border-r border-[#bdbdbd] pt-[2px] pl-[15px]">
          <Svg w={8} h={11}>
            <path stroke="none" fill="#b5b5b5" d="M7.500 0v11L0 5.500z" />
          </Svg>
          <Svg w={8} h={11} className="ml-[15px]">
            <path stroke="none" fill="#4a4a4a" d="M0 0v11l7.500-5.500z" />
          </Svg>
        </div>
        {SHEETS.map((s) =>
          s.active ? (
            <div
              key={s.label}
              className={`flex h-[23px] items-center justify-center rounded-b-[3px] border-b-2 border-[#8f8f8f] bg-white pt-[3px] font-bold tracking-[-0.2px] text-[#2f6b3a] ${s.width}`}
            >
              {s.label}
            </div>
          ) : (
            <div key={s.label} className={`border-t border-[#bdbdbd] ${s.width}`}>
              <div className="flex h-[20px] items-center justify-center border-r border-[#bdbdbd] pt-[3px] whitespace-nowrap">
                {s.label}
              </div>
            </div>
          )
        )}
        <div className="w-[122px] border-t border-[#bdbdbd]">
          <div className="h-[20px] overflow-hidden border-r border-[#bdbdbd] pt-[3px] pl-[19px] whitespace-nowrap">
            <span className="block w-[98px] overflow-hidden [mask-image:linear-gradient(to_right,black_76%,transparent)]">
              Monthly Cash Flow
            </span>
          </div>
        </div>
        <div className="w-[38px] border-t border-[#bdbdbd]">
          <div className="flex h-[20px] items-center justify-center border-r border-[#bdbdbd] pt-[3px]">
            <Svg w={10} h={10}>
              <path strokeWidth="1.8" d="M5 0v10M0 5h10" />
            </Svg>
          </div>
        </div>
        <div className="flex-1 border-t border-[#bdbdbd]" />
      </div>
    </div>
  );
}

/* ---------- task pane ---------- */

function PaneToolbar() {
  return (
    <div className="flex h-[52px] items-center text-[14px] text-[#0b0b0b]">
      <PanelLeft className="ml-[21px] shrink-0" size={18} strokeWidth={2} />
      <i className="ml-[9px] h-[7px] w-[7px] shrink-0 rounded-full bg-[#1f1f1f]" />
      <Plus className="ml-[10px] shrink-0" size={18} strokeWidth={1.8} />
      <span className="ml-[8px] w-[26px] text-[12.5px] font-medium tracking-[-0.2px]">New</span>
      <Star className="ml-[592px] shrink-0" size={16} />
      <Brain className="ml-[22px] shrink-0" size={16} />
      <div className="ml-[15px] flex h-[30px] w-[72px] shrink-0 items-center rounded-md bg-[#2b2b2a] pl-[10px]">
        <Pencil size={16} className="shrink-0" />
        <span className="ml-[3px] text-[12.5px] tracking-[-0.2px]">Agent</span>
      </div>
      <PencilOff className="ml-[7px] shrink-0 opacity-60" size={16} />
      <span className="ml-[4px] w-[22px] text-[12.5px] tracking-[-0.2px] opacity-60">Ask</span>
      <Sparkles className="ml-[22px] shrink-0" size={16} />
      <div className="ml-[3px] w-[24px] shrink-0 overflow-hidden text-[12.5px]">Auto</div>
      <div className="-mt-[12px] mr-[5px] ml-auto flex h-[28px] w-[28px] shrink-0 items-center justify-center rounded-[5px] border border-[#5c5c5c] bg-[#2b2b2b] font-['Liberation_Serif'] text-[19px] font-bold text-white italic">
        i
      </div>
    </div>
  );
}

function Composer() {
  return (
    <div className="mt-auto mr-[135px] mb-[23px] ml-[132px]">
      <div className="mb-[4px] flex justify-end pr-[12px] text-[12px] text-[#0d0d0d]">Audit</div>
      <div className="h-[139px] rounded-xl border border-[#2c2c2c] pt-[23px] pl-[24px]">
        <div className="h-[13px] w-[12px] border-2 border-[#111]" />
        <div className="mt-[62px] flex h-[28px] items-center text-[#080808]">
          <Paperclip className="-ml-[10px]" size={16} />
          <FolderOpen className="ml-[18px]" size={16} />
          <div className="relative ml-[18px]">
            <AtSign size={16} />
            <span className="absolute -top-[10px] left-[12px] flex h-[14px] w-[14px] items-center justify-center rounded-full bg-[#16265f] text-[8px] text-[#5f6a8c]">
              12
            </span>
          </div>
          <div className="relative ml-[17px] text-[#141414]">
            <Globe size={15} />
            <i className="absolute -top-[8px] left-[14px] h-[7px] w-[7px] rounded-full bg-[#191919]" />
          </div>
          <div className="relative ml-[17px]">
            <Globe className="text-[#101c44]" fill="#1b2f78" size={14} />
            <i className="absolute -top-[8px] left-[14px] h-[7px] w-[7px] rounded-full bg-[#191919]" />
          </div>
          <Mic className="mr-[13px] ml-auto" size={16} />
          <div className="mr-[7px] flex h-[28px] w-[28px] items-center justify-center rounded-full bg-[#1c1c1c]">
            <Svg w={12} h={14}>
              <path stroke="#333" strokeWidth="1.5" d="M6 13V1M1 6l5-5 5 5" />
            </Svg>
          </div>
        </div>
      </div>
    </div>
  );
}

function FieldLabel({
  label,
  hint,
  hintClass = 'tracking-[-0.15px]',
}: {
  label: string;
  hint?: string;
  hintClass?: string;
}) {
  return (
    <div className="flex h-[20px] items-center text-[14px] font-medium text-[#111]">
      {label}
      {hint && <span className={`ml-[9px] text-[12px] font-normal text-[#5c5c5c] ${hintClass}`}>{hint}</span>}
    </div>
  );
}

function ModalButton({
  children,
  variant = 'outline',
  className = '',
}: {
  children: ReactNode;
  variant?: 'primary' | 'outline' | 'muted';
  className?: string;
}) {
  const styles = {
    primary: 'bg-[#27666d] text-[#edf5f5]',
    outline: 'border border-[#e0e0e0] bg-[#fefefe] text-[#111]',
    muted: 'border border-[#e0e0e0] bg-[#f1f1f1] text-[#111]',
  };
  return (
    <button
      className={`flex items-center justify-center rounded-[6px] text-[14px] font-medium ${styles[variant]} ${className}`}
    >
      {children}
    </button>
  );
}

function CompsModal() {
  return (
    <div className="flex h-[610px] w-[672px] flex-col rounded-[9px] bg-[#fefefe] px-[25px] pt-[22px] tracking-[-0.2px] shadow-lg">
      <div className="flex h-[24px] justify-between">
        <h2 className="text-[18px] leading-[24px] font-semibold tracking-[-0.75px] text-[#111]">Comps Analysis</h2>
        <X className="-mt-[5px] -mr-[8px] text-[#555]" size={16} strokeWidth={1.6} />
      </div>
      <p className="mt-[3px] h-[20px] text-[14px] leading-[20px] tracking-[-0.25px] text-[#6b6b6b]">
        Find comparable companies or transactions with web search
      </p>

      <div className="mt-[34px]">
        <FieldLabel label="Task Description" hint="Describe what you're looking for" />
      </div>
      <div className="mt-[10px] h-[80px] rounded-[6px] border border-[#d4d4d4] px-[12px] pt-[8px] text-[14px] leading-[20px] text-[#6b6b6b] outline-2 outline-offset-2 outline-[#111]">
        <div className="flex items-center">
          <i className="-mr-px h-[18px] w-[1.5px] bg-[#2c4a3e]" />
          Example: recent real estate transactions for office type in 2025
        </div>
      </div>

      <div className="mt-[18px]">
        <FieldLabel label="Output Sheet" />
      </div>
      <div className="mt-[10px] flex h-[36px] gap-[8px]">
        <ModalButton variant="primary" className="w-[306px] tracking-[-0.1px]">New Sheet</ModalButton>
        <ModalButton className="w-[308px]">Use Template Sheet</ModalButton>
      </div>

      <div className="mt-[18px]">
        <FieldLabel
          label="Template Sheets"
          hint="Optional - Select format templates"
          hintClass="tracking-[0.03px]"
        />
      </div>
      <div className="mt-[10px] flex h-[40px] items-center justify-between rounded-[6px] border border-[#e0e0e0] pr-[15px] pl-[12px] text-[14px] tracking-[-0.1px] text-[#5f5f5f]">
        Select template sheets (optional)...
        <svg viewBox="0 0 10 6" className="h-[6px] w-[10px]" fill="none" stroke="#222" strokeWidth="1.5">
          <path d="M1 .8 5 4.800 9 .8" />
        </svg>
      </div>
      <div className="mt-[4px] h-[16px] text-[12px] leading-[16px] text-[#6b6b6b]">12 sheets available</div>

      <div className="mt-[18px]">
        <FieldLabel label="Number of Records" hint="Default: Flexible" hintClass="tracking-[0px]" />
      </div>
      <div className="mt-[10px] flex h-[36px] gap-[8px]">
        <div className="flex w-[203px] items-center rounded-[6px] border border-[#e0e0e0] pl-[37px] text-[14px] text-[#222]">
          <span className="w-[41px]">10</span>
          <div className="flex h-[18px] w-[12px] flex-col items-center justify-center gap-[4px] rounded-full border border-[#d4d4d4]">
            <svg viewBox="0 0 8 5" className="h-[4px] w-[7px]" fill="none" stroke="#222" strokeWidth="1.5">
              <path d="M1 4.200 4 1.200 7 4.200" />
            </svg>
            <svg viewBox="0 0 8 5" className="h-[4px] w-[7px]" fill="none" stroke="#222" strokeWidth="1.5">
              <path d="M1 .8 4 3.800 7 .8" />
            </svg>
          </div>
        </div>
        <ModalButton variant="primary" className="w-[200px] tracking-[-0.1px]">Flexible</ModalButton>
        <ModalButton className="w-[203px]">Max</ModalButton>
      </div>
      <div className="mt-[8px] h-[16px] text-[12px] leading-[16px] tracking-[-0.23px] text-[#6b6b6b]">
        Maximum 100 records (recommended: 5-20 for web search)
      </div>

      <div className="mt-[32px] flex h-[40px] justify-end gap-[8px]">
        <ModalButton variant="muted" className="w-[79px]">Cancel</ModalButton>
        <ModalButton variant="primary" className="w-[135px] tracking-[-0.1px]">Execute Search</ModalButton>
      </div>
    </div>
  );
}

function TaskPane() {
  return (
    <div className="flex flex-1 flex-col border-l border-[#b5b5b5]">
      <div className="flex h-[27px] items-center justify-between bg-[#e6e6e6] pr-[17px] pl-[16px] text-[14px] font-medium text-[#333]">
        TabAI
        <div className="flex h-[14px] w-[14px] items-center justify-center rounded-full bg-[#636363]">
          <X className="text-white" size={10} strokeWidth={3} />
        </div>
      </div>
      <div className="relative flex flex-1 flex-col bg-[#2f2f2f]">
        <PaneToolbar />
        <Svg w={30} h={36} className="mt-[181px] ml-[140px]">
          <path stroke="#000" strokeWidth="6" d="M30 3H3v30h14M25 36V22" />
        </Svg>
        <Composer />
        <div className="absolute inset-0 flex items-center justify-center pr-[2px]">
          <CompsModal />
        </div>
        {/* Mouse pointer over the pane */}
        <svg viewBox="0 0 12 18" className="absolute top-[508px] left-[617px] h-[18px] w-[12px]" stroke="#fff">
          <path d="M1 1v13.500l3.200-3 2.300 5.300 2.200-1-2.300-5H11z" fill="#000" />
        </svg>
      </div>
    </div>
  );
}

function StatusBar() {
  return (
    <div className="flex h-[23px] items-center border-t border-[#8f8f8f] bg-linear-to-b from-[#dfdfdf] to-[#d2d2d2] text-[12px] text-[#555]">
      <span className="w-[55px] pl-[24px]">Ready</span>
      <Svg w={15} h={15} className="ml-[23px]">
        <g stroke="#555">
          <circle cx="6.5" cy="2.5" r="1.6" />
          <path d="M1 3.500c0 1.500 1.500 2 3 2.500v3l-1.500 5M12 3.500c0 1.500-1.500 2-3 2.500v2M4.500 14.500l2-4.500M8 9l6 5.500M14 9l-6 5.500" />
        </g>
      </Svg>
      <span className="ml-[4px]">Accessibility: Investigate</span>
      <div className="ml-auto flex h-full items-center">
        <div className="flex h-full w-[37px] items-center justify-center bg-[#9c9c9c]">
          <Svg w={13} h={14}>
            <path stroke="#fff" strokeWidth="1.3" d="M.6 .6h11.800v12.800H.6zM.6 4.800h11.800M.6 9.200h11.800M4.500 .6v12.800M8.500 .6v12.800" />
          </Svg>
        </div>
        <Svg w={13} h={14} className="ml-[11px]">
          <path stroke="#666" strokeWidth="1.1" d="M.6 .6h11.800v12.800H.6zM3 3h7v8H3zM4.500 5h4M4.500 7h4M4.500 9h4" />
        </Svg>
        <Svg w={13} h={14} className="ml-[23px]">
          <path stroke="#666" strokeWidth="1.1" d="M.6 .6h11.800v12.800H.6zM3.500 .6v8.500h5.500V.6M6.300 .6v5" />
        </Svg>
        <div className="ml-[19px] h-[2px] w-[8px] bg-[#555]" />
        <div className="ml-[7px] flex h-[4px] w-[100px] items-center justify-center rounded-full bg-[#8f8f8f] pl-[6px]">
          <div className="h-[16px] w-[16px] shrink-0 rounded-full border border-[#c2c2c2] bg-white" />
        </div>
        <Svg w={9} h={9} className="ml-[7px]">
          <path strokeWidth="2" stroke="#555" d="M4.500 0v9M0 4.500h9" />
        </Svg>
        <span className="ml-[18px] w-[56px]">125%</span>
      </div>
    </div>
  );
}

export default function App() {
  return (
    <div className="flex h-[1080px] w-[1920px] flex-col overflow-hidden bg-[#f3f3f3] font-[Inter,sans-serif]">
      <TitleBar />
      <TabRow />
      <Ribbon />
      <FormulaBar />
      <div className="flex min-h-0 flex-1">
        <Worksheet />
        <TaskPane />
      </div>
      <StatusBar />
    </div>
  );
}
